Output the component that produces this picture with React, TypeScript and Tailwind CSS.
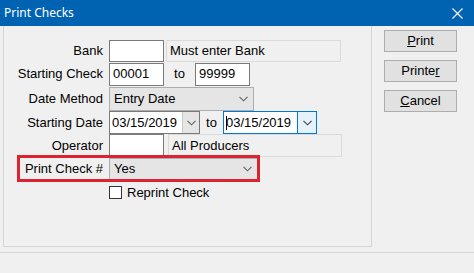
import React from 'react';

const font = { fontFamily: '"Liberation Sans", Arial, sans-serif' };

function Chevron({ color = '#606060' }: { color?: string }) {
  return (
    <svg width="9" height="6" viewBox="0 0 9 6">
      <path d="M0.5 0.8 L4.5 4.8 L8.5 0.8" fill="none" stroke={color} strokeWidth="1.1" />
    </svg>
  );
}

function Label({ children }: { children: React.ReactNode }) {
  return <div className="w-[105px] pr-[6px] text-right shrink-0">{children}</div>;
}

function Btn({ children }: { children: React.ReactNode }) {
  return (
    <div className="w-[73px] h-[22px] flex items-center justify-center bg-[#e1e1e1] border border-[#adadad] text-[13px] text-black">
      {children}
    </div>
  );
}

export default function App() {
  return (
    <div className="w-[474px] h-[273px] bg-[#f0f0f0] flex flex-col overflow-hidden text-[13px] text-black" style={font}>
      {/* title bar */}
      <div className="h-[26px] bg-[#0063b1] flex items-center justify-between pl-[4px] pr-[11px] shrink-0">
        <span className="text-white text-[12px]" style={{ fontFamily: '"Noto Sans", "Open Sans", sans-serif' }}>Print Checks</span>
        <svg width="11" height="11" viewBox="0 0 11 11">
          <path d="M0.5 0.5 L10.5 10.5 M10.5 0.5 L0.5 10.5" stroke="#fff" strokeWidth="1.1" />
        </svg>
      </div>

      <div className="flex">
        {/* group box */}
        <div className="ml-[3px] w-[369px] h-[221px] border-x border-b border-[#d5d5d5] pt-[14px] flex flex-col">
          <div className="flex items-center h-[22px]">
            <Label>Bank</Label>
            <div className="w-[55px] h-[22px] bg-white border border-[#7a7a7a]" />
            <div className="ml-[2px] w-[175px] h-[22px] border border-[#dadada] flex items-center pl-[3px]">Must enter Bank</div>
          </div>

          <div className="flex items-center h-[24px]">
            <Label>Starting Check</Label>
            <div className="w-[55px] h-[23px] bg-white border border-[#7a7a7a] flex items-center pl-[3px]">00001</div>
            <div className="w-[31px] text-center">to</div>
            <div className="w-[55px] h-[23px] bg-white border border-[#7a7a7a] flex items-center pl-[3px]">99999</div>
          </div>

          <div className="flex items-center h-[25px]">
            <Label>Date Method</Label>
            <div className="w-[145px] h-[24px] bg-[#e5e5e5] border border-[#adadad] flex items-center justify-between pl-[4px] pr-[5px]">
              <span>Entry Date</span>
              <Chevron />
            </div>
          </div>

          <div className="flex items-center h-[23px]">
            <Label>Starting Date</Label>
            <div className="w-[91px] h-[23px] bg-white border border-[#7a7a7a] flex">
              <div className="flex-1 flex items-center pl-[2px]">03/15/2019</div>
              <div className="w-[17px] bg-[#e5e5e5] border-l border-[#c8c8c8] flex items-center justify-center">
                <Chevron />
              </div>
            </div>
            <div className="w-[23px] text-center">to</div>
            <div className="w-[94px] h-[23px] bg-white border border-[#0078d7] flex">
              <div className="flex-1 flex items-center pl-[2px]">
                <span className="w-px h-[14px] bg-black" />
                <span className="-ml-px">03/15/2019</span>
              </div>
              <div className="w-[19px] bg-[#e5f1fb] border-l border-[#0078d7] flex items-center justify-center">
                <Chevron color="#404040" />
              </div>
            </div>
          </div>

          <div className="flex items-center h-[23px]">
            <Label>Operator</Label>
            <div className="w-[55px] h-[23px] bg-white border border-[#7a7a7a]" />
            <div className="ml-[4px] w-[174px] h-[23px] border border-[#dadada] flex items-center pl-[3px]">All Producers</div>
          </div>

          <div className="relative flex items-center h-[24px]">
            <Label>Print Check #</Label>
            <div className="w-[150px] h-[23px] bg-[#e5e5e5] border border-[#adadad] flex items-center justify-between pl-[4px] pr-[6px]">
              <span>Yes</span>
              <Chevron />
            </div>
            <div className="absolute left-[13px] -top-[2px] w-[243px] h-[27px] border-[3px] border-[#dc2430]" />
          </div>

          <div className="flex items-center h-[13px] mt-[5px] pl-[105px]">
            <div className="w-[13px] h-[13px] bg-white border border-[#333]" />
            <span className="ml-[5px]">Reprint Check</span>
          </div>
        </div>

        {/* buttons */}
        <div className="ml-[12px] pt-[4px] flex flex-col gap-[8px]">
          <Btn><span><u>P</u>rint</span></Btn>
          <Btn><span>Printe<u>r</u></span></Btn>
          <Btn><span><u>C</u>ancel</span></Btn>
        </div>
      </div>

      <div className="mt-[5px] h-px bg-[#d9d9d9]" />
    </div>
  );
}
